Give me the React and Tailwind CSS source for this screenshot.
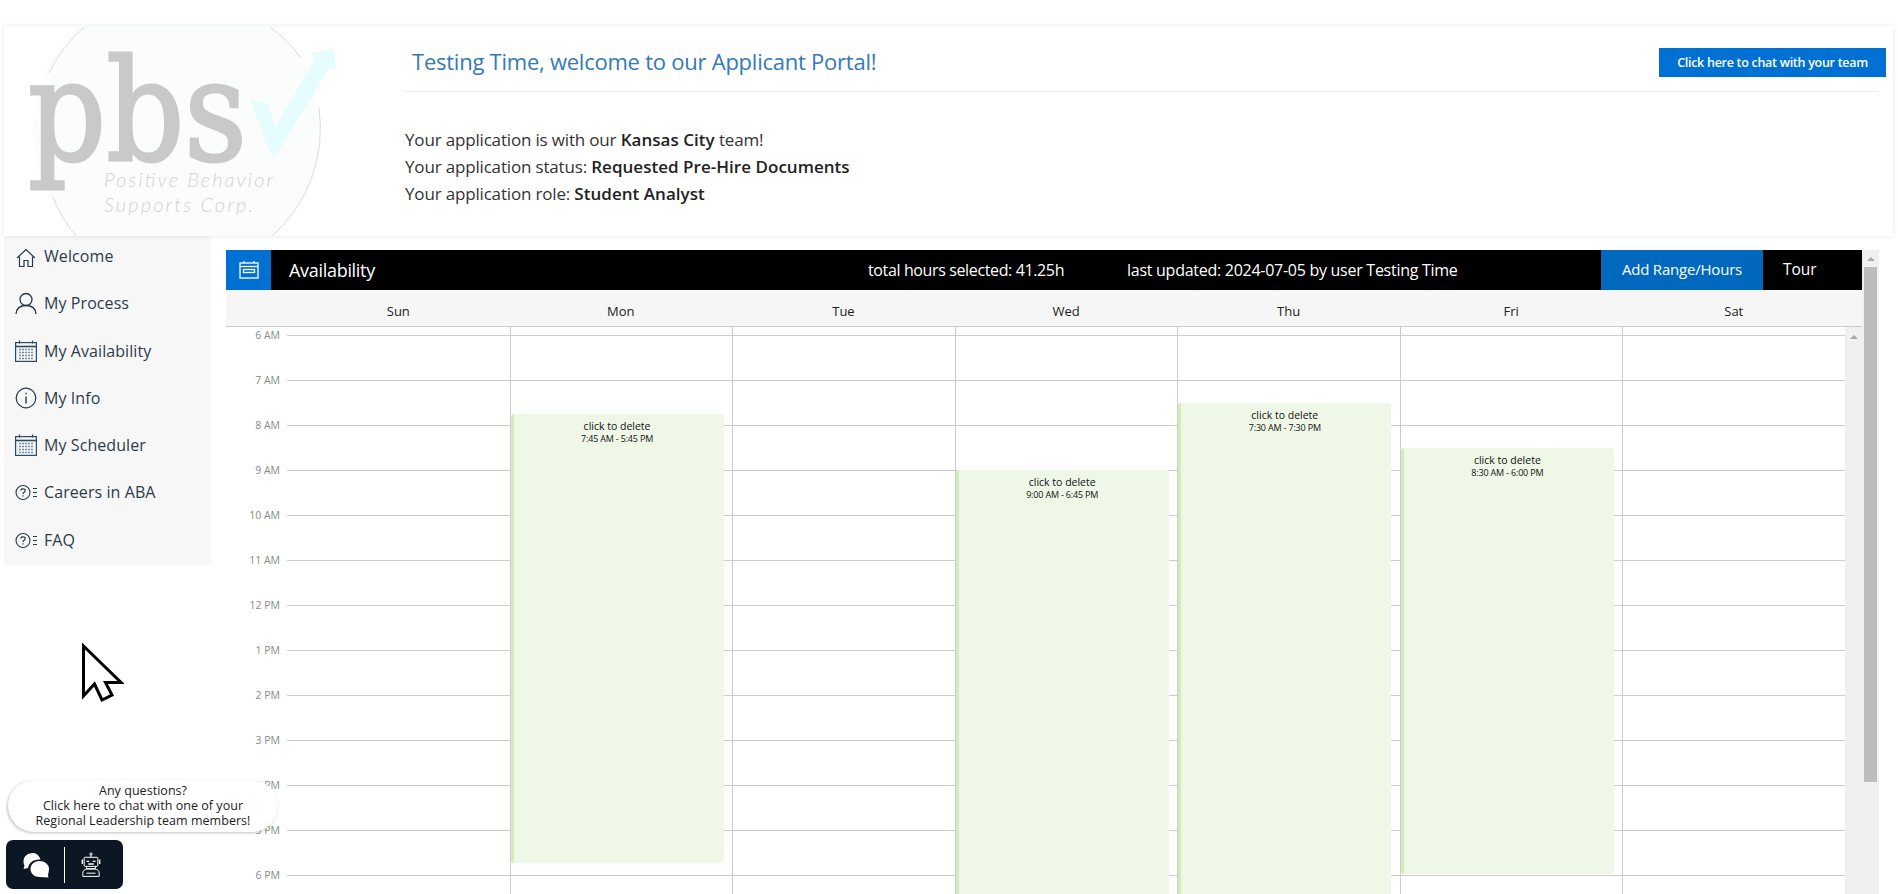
import React from "react";

const DAYS = ["Sun", "Mon", "Tue", "Wed", "Thu", "Fri", "Sat"];
const HOURS = ["6 AM", "7 AM", "8 AM", "9 AM", "10 AM", "11 AM", "12 PM", "1 PM", "2 PM", "3 PM", "4 PM", "5 PM", "6 PM", "7 PM"];
const HOUR_HEIGHT = 45;

// start / end in hours, day index into DAYS
const EVENTS = [
  { day: 1, start: 7.75, end: 17.75, label: "7:45 AM - 5:45 PM" },
  { day: 3, start: 9, end: 18.75, label: "9:00 AM - 6:45 PM" },
  { day: 4, start: 7.5, end: 19.5, label: "7:30 AM - 7:30 PM" },
  { day: 5, start: 8.5, end: 18, label: "8:30 AM - 6:00 PM" },
];

const HomeIcon = () => (
  <svg width="22" height="24" viewBox="0 0 22 24" fill="none" stroke="#24384c" strokeWidth="1.2" className="mt-1">
    <path d="M2 12 L11 3.5 L20 12" />
    <path d="M4.5 10.5 V20.5 H9 V14.5 H13 V20.5 H17.5 V10.5" />
  </svg>
);

const PersonIcon = () => (
  <svg width="22" height="24" viewBox="0 0 22 24" fill="none" stroke="#24384c" strokeWidth="1.3">
    <circle cx="11" cy="8.5" r="6" />
    <path d="M1 23 C1.5 17 6 14.5 11 14.5 C16 14.5 20.5 17 21 23" />
  </svg>
);

const CalendarIcon = () => (
  <svg width="22" height="22" viewBox="0 0 22 22" fill="none" stroke="#2f4a63" strokeWidth="1.2">
    <rect x="0.6" y="2.6" width="20.8" height="18.8" />
    <path d="M0.6 6.5 H21.4" strokeWidth="1.6" />
    <path d="M4.5 0.5 V3.5 M17.5 0.5 V3.5" />
    <path d="M4 9.5 H18 M4 12.5 H18 M4 15.5 H18 M4 18.5 H18" stroke="#6f8dab" strokeWidth="1.4" strokeDasharray="2 1" />
  </svg>
);

const InfoIcon = () => (
  <svg width="22" height="22" viewBox="0 0 22 22" fill="none" stroke="#24384c" strokeWidth="1.2">
    <circle cx="11" cy="11" r="9.8" />
    <path d="M11 9.5 V16.5" strokeWidth="1.4" />
    <path d="M11 5.8 V7.2" strokeWidth="1.4" />
  </svg>
);

const QuestionListIcon = () => (
  <svg width="22" height="22" viewBox="0 0 22 22" fill="none" stroke="#24384c" strokeWidth="1.1">
    <circle cx="8" cy="11.5" r="7" />
    <path d="M5.8 9.6 C5.8 7.2 10.2 7.2 10.2 9.6 C10.2 11.2 8 11.2 8 13" strokeWidth="1.2" />
    <path d="M8 14.2 V15.4" strokeWidth="1.2" />
    <path d="M18 7.5 H22 M18 11.5 H22 M18 15.5 H22" />
  </svg>
);

const NAV = [
  { label: "Welcome", icon: <HomeIcon /> },
  { label: "My Process", icon: <PersonIcon /> },
  { label: "My Availability", icon: <CalendarIcon /> },
  { label: "My Info", icon: <InfoIcon /> },
  { label: "My Scheduler", icon: <CalendarIcon /> },
  { label: "Careers in ABA", icon: <QuestionListIcon /> },
  { label: "FAQ", icon: <QuestionListIcon /> },
];

const Logo = () => (
  <svg width="400" height="210" viewBox="4 26 400 210" className="shrink-0">
    <circle cx="177" cy="131" r="144" fill="#fbfdfd" stroke="none" />
    <path d="M49 73 A144 144 0 0 1 84 27" fill="none" stroke="#dcdcdc" />
    <path d="M270 27 A144 144 0 0 1 301 58" fill="none" stroke="#dcdcdc" />
    <path d="M319 108 A144 144 0 0 1 272 236" fill="none" stroke="#dcdcdc" />
    <path d="M53 197 A144 144 0 0 0 76 236" fill="none" stroke="#dcdcdc" />
    <text x="28" y="160" fontFamily="'DejaVu Serif', serif" fontSize="140" fill="#c9c9c9" stroke="#c9c9c9" strokeWidth="3" textLength="219" lengthAdjust="spacingAndGlyphs">pbs</text>
    <polygon points="250,100 268,103 275,128 315,58 310,54 333,48 337,71 330,67 273,160" fill="#e5fdfe" />
    <text x="104" y="187" fontFamily="Lato, sans-serif" fontStyle="italic" fontWeight="300" fontSize="20" fill="#d2d2d2" textLength="169">Positive Behavior</text>
    <text x="104" y="212" fontFamily="Lato, sans-serif" fontStyle="italic" fontWeight="300" fontSize="20" fill="#d2d2d2" textLength="149">Supports Corp.</text>
  </svg>
);

const ArrowUp = () => <div className="h-0 w-0 border-x-[4px] border-b-[4px] border-x-transparent border-b-[#a8a8a8]" />;

const App = () => {
  return (
    <div className="relative h-[894px] w-full overflow-hidden bg-white pt-[26px] font-['Open_Sans',sans-serif] text-[#333]">
      {/* Header card */}
      <div className="relative z-10 mx-1 flex h-[210px] w-[1889px] overflow-hidden bg-white shadow-[0_0_5px_rgba(0,0,0,0.1)]">
        <Logo />
        <div className="flex-1 pr-[15px]">
          <div className="flex h-[66px] items-start justify-between border-b border-[#eee] pt-[22px]">
            <h1 className="-mt-px pl-2 text-[22px] leading-[29px] tracking-[-0.24px] text-[#337ab7]">
              Testing Time, welcome to our Applicant Portal!
            </h1>
            <button className="-mr-2 h-[29px] w-[227px] bg-[#0070d2] pt-px text-[12.5px] font-semibold tracking-[-0.28px] text-white">
              Click here to chat with your team
            </button>
          </div>
          <div className="pl-px pt-[34px] text-[17px] leading-[27px] tracking-[-0.17px]">
            <p>Your application is with our <b className="font-semibold tracking-[0.03px] text-[#222]">Kansas City</b> team!</p>
            <p>Your application status: <b className="font-semibold tracking-[0.03px] text-[#222]">Requested Pre-Hire Documents</b></p>
            <p>Your application role: <b className="font-semibold tracking-[0.03px] text-[#222]">Student Analyst</b></p>
          </div>
        </div>
      </div>

      <div className="flex">
        {/* Sidebar */}
        <nav className="ml-1 flex h-[329px] w-[207px] flex-col gap-[23.25px] bg-[#f7f7f7] pl-[11px] pt-2">
          {NAV.map((item) => (
            <div key={item.label} className="flex h-6 items-center gap-[7px] text-[16px] tracking-[0.08px]">
              <span className="flex w-[22px] shrink-0 justify-center">{item.icon}</span>
              <span className="text-[#2f3b4a]">{item.label}</span>
            </div>
          ))}
        </nav>

        {/* Calendar */}
        <div className="ml-[15px] mt-[14px] flex h-[644px] w-[1653px]">
          <div className="flex w-[1636px] flex-col">
            <div className="flex h-10 shrink-0 items-center bg-black text-white">
              <div className="flex h-full w-[45px] items-center justify-center bg-[#0070d2]">
                <svg width="20" height="20" viewBox="0 0 20 20" fill="none" stroke="white" strokeWidth="1.3">
                  <rect x="1" y="3" width="18" height="15" />
                  <path d="M1 6.5 H19" />
                  <path d="M5 1 V3 M15 1 V3" />
                  <rect x="4.5" y="9.5" width="11" height="3" />
                </svg>
              </div>
              <span className="ml-[18px] w-[579px] text-[18px] tracking-[-0.3px]">Availability</span>
              <span className="w-[259px] text-[16px] tracking-[-0.37px]">total hours selected: 41.25h</span>
              <span className="w-[474px] text-[16px] tracking-[-0.27px]">last updated: 2024-07-05 by user Testing Time</span>
              <button className="h-full w-[162px] bg-[#0068bd] pb-0.5 text-[15px] tracking-[-0.2px] text-white">Add Range/Hours</button>
              <span className="ml-5 text-[15.5px]">Tour</span>
            </div>

            <div className="flex h-[37px] shrink-0 border-b border-[#ccc] bg-[#f6f6f6] pl-[61px] pr-[17px]">
              {DAYS.map((day) => (
                <div key={day} className="flex flex-1 items-center justify-center pt-[7px] text-[13px] text-[#222]">{day}</div>
              ))}
            </div>

            <div className="flex min-h-0 flex-1">
              <div className="relative flex-1 overflow-hidden pt-2">
                {HOURS.map((hour) => (
                  <div key={hour} className="flex h-[45px]">
                    <div className="-mt-[7px] h-[14px] w-[61px] pr-[7px] text-right text-[10.5px] leading-[14px] text-[#8a8a8a]">{hour}</div>
                    <div className="flex-1 border-t border-[#ccc]" />
                  </div>
                ))}
                <div className="absolute inset-y-0 left-[61px] right-0 grid grid-cols-7">
                  {DAYS.map((day, dayIndex) => (
                    <div key={day} className={dayIndex === 0 ? "relative" : "relative border-l border-[#ccc]"}>
                      {EVENTS.filter((event) => event.day === dayIndex).map((event) => (
                        <div
                          key={event.label}
                          className="absolute left-0 w-[213px] rounded-[3px] border-l-[3px] border-[#d2ebbf] bg-[#eff8e7] pr-[3px] pt-[6px] text-center text-[#111]"
                          style={{
                            top: 8 + (event.start - 6) * HOUR_HEIGHT,
                            height: (event.end - event.start) * HOUR_HEIGHT - 1,
                          }}
                        >
                          <div className="text-[10.5px] leading-[13px]">click to delete</div>
                          <div className="text-[9px] leading-[12px] tracking-[-0.18px]">{event.label}</div>
                        </div>
                      ))}
                    </div>
                  ))}
                </div>
              </div>
              <div className="flex w-[17px] shrink-0 justify-center bg-[#f0f0f0] pt-2">
                <ArrowUp />
              </div>
            </div>
          </div>

          {/* Outer scrollbar */}
          <div className="flex w-[17px] flex-col items-center bg-[#f0f0f0] pt-[7px]">
            <ArrowUp />
            <div className="mt-1.5 h-[515px] w-[13px] bg-[#bcbcbc]" />
          </div>
        </div>
      </div>

      {/* Mouse pointer from the recording */}
      <svg width="44" height="60" viewBox="0 0 44 60" className="absolute left-[80px] top-[643px]">
        <path d="M3.5 3 L41 39.5 L25.5 39.5 L32 52 L22 57 L14.5 41 L3.5 53 Z" fill="white" stroke="black" strokeWidth="3" strokeLinejoin="miter" />
      </svg>

      {/* Chat bubble */}
      <div className="absolute left-2 top-[780px] z-20 flex h-[52px] w-[270px] flex-col items-center justify-center rounded-full bg-white pb-0.5 text-[12.5px] leading-[15px] tracking-[0.04px] text-[#222] shadow-[-1px_1px_3px_rgba(0,0,0,0.25)]">
        <div>Any questions?</div>
        <div>Click here to chat with one of your</div>
        <div>Regional Leadership team members!</div>
      </div>

      {/* Chat launcher */}
      <div className="absolute left-[6px] top-[840px] z-20 flex h-[49px] w-[117px] items-center rounded-[7px] bg-[#0b1722]">
        <div className="flex w-[58px] justify-center pl-0.5">
          <svg width="28" height="28" viewBox="0 0 28 28" fill="white">
            <path d="M11 2 C5.5 2 1.5 5.5 1.5 10.5 C1.5 12 2 13.5 2.5 14.5 L1.5 18 L6 17 C7 12 11 8.5 17 8.5 C17.5 8.5 18 8.5 18.5 8.6 C17 4.5 14.5 2 11 2 Z" />
            <path d="M17.5 10 C12.5 10 8.5 13.5 8.5 18 C8.5 22.5 12.5 26 17.5 26 L26.5 26.5 L26 24 C26.5 22 27 20 27 18 C27 13.5 22.5 10 17.5 10 Z" />
          </svg>
        </div>
        <div className="h-9 w-px bg-white" />
        <div className="flex flex-1 justify-center pr-1.5">
          <svg width="20" height="26" viewBox="0 0 22 28" fill="none" stroke="white" strokeWidth="1.1">
            <circle cx="11" cy="2" r="1.2" />
            <path d="M11 3.2 V5.5" />
            <rect x="3.5" y="5.5" width="15" height="10" rx="1" />
            <path d="M1.5 8 V13 M20.5 8 V13" strokeWidth="1.6" />
            <path d="M6 10 H9 M13 10 H16 M8 13 H14" strokeWidth="1.6" />
            <path d="M6 15.5 V18 H16 V15.5" />
            <path d="M2 26.5 V23 C2 20.5 4 18.5 6.5 18.5 H15.5 C18 18.5 20 20.5 20 23 V26.5 Z" />
            <path d="M6 23 H16" />
          </svg>
        </div>
      </div>
    </div>
  );
};

export default App;
